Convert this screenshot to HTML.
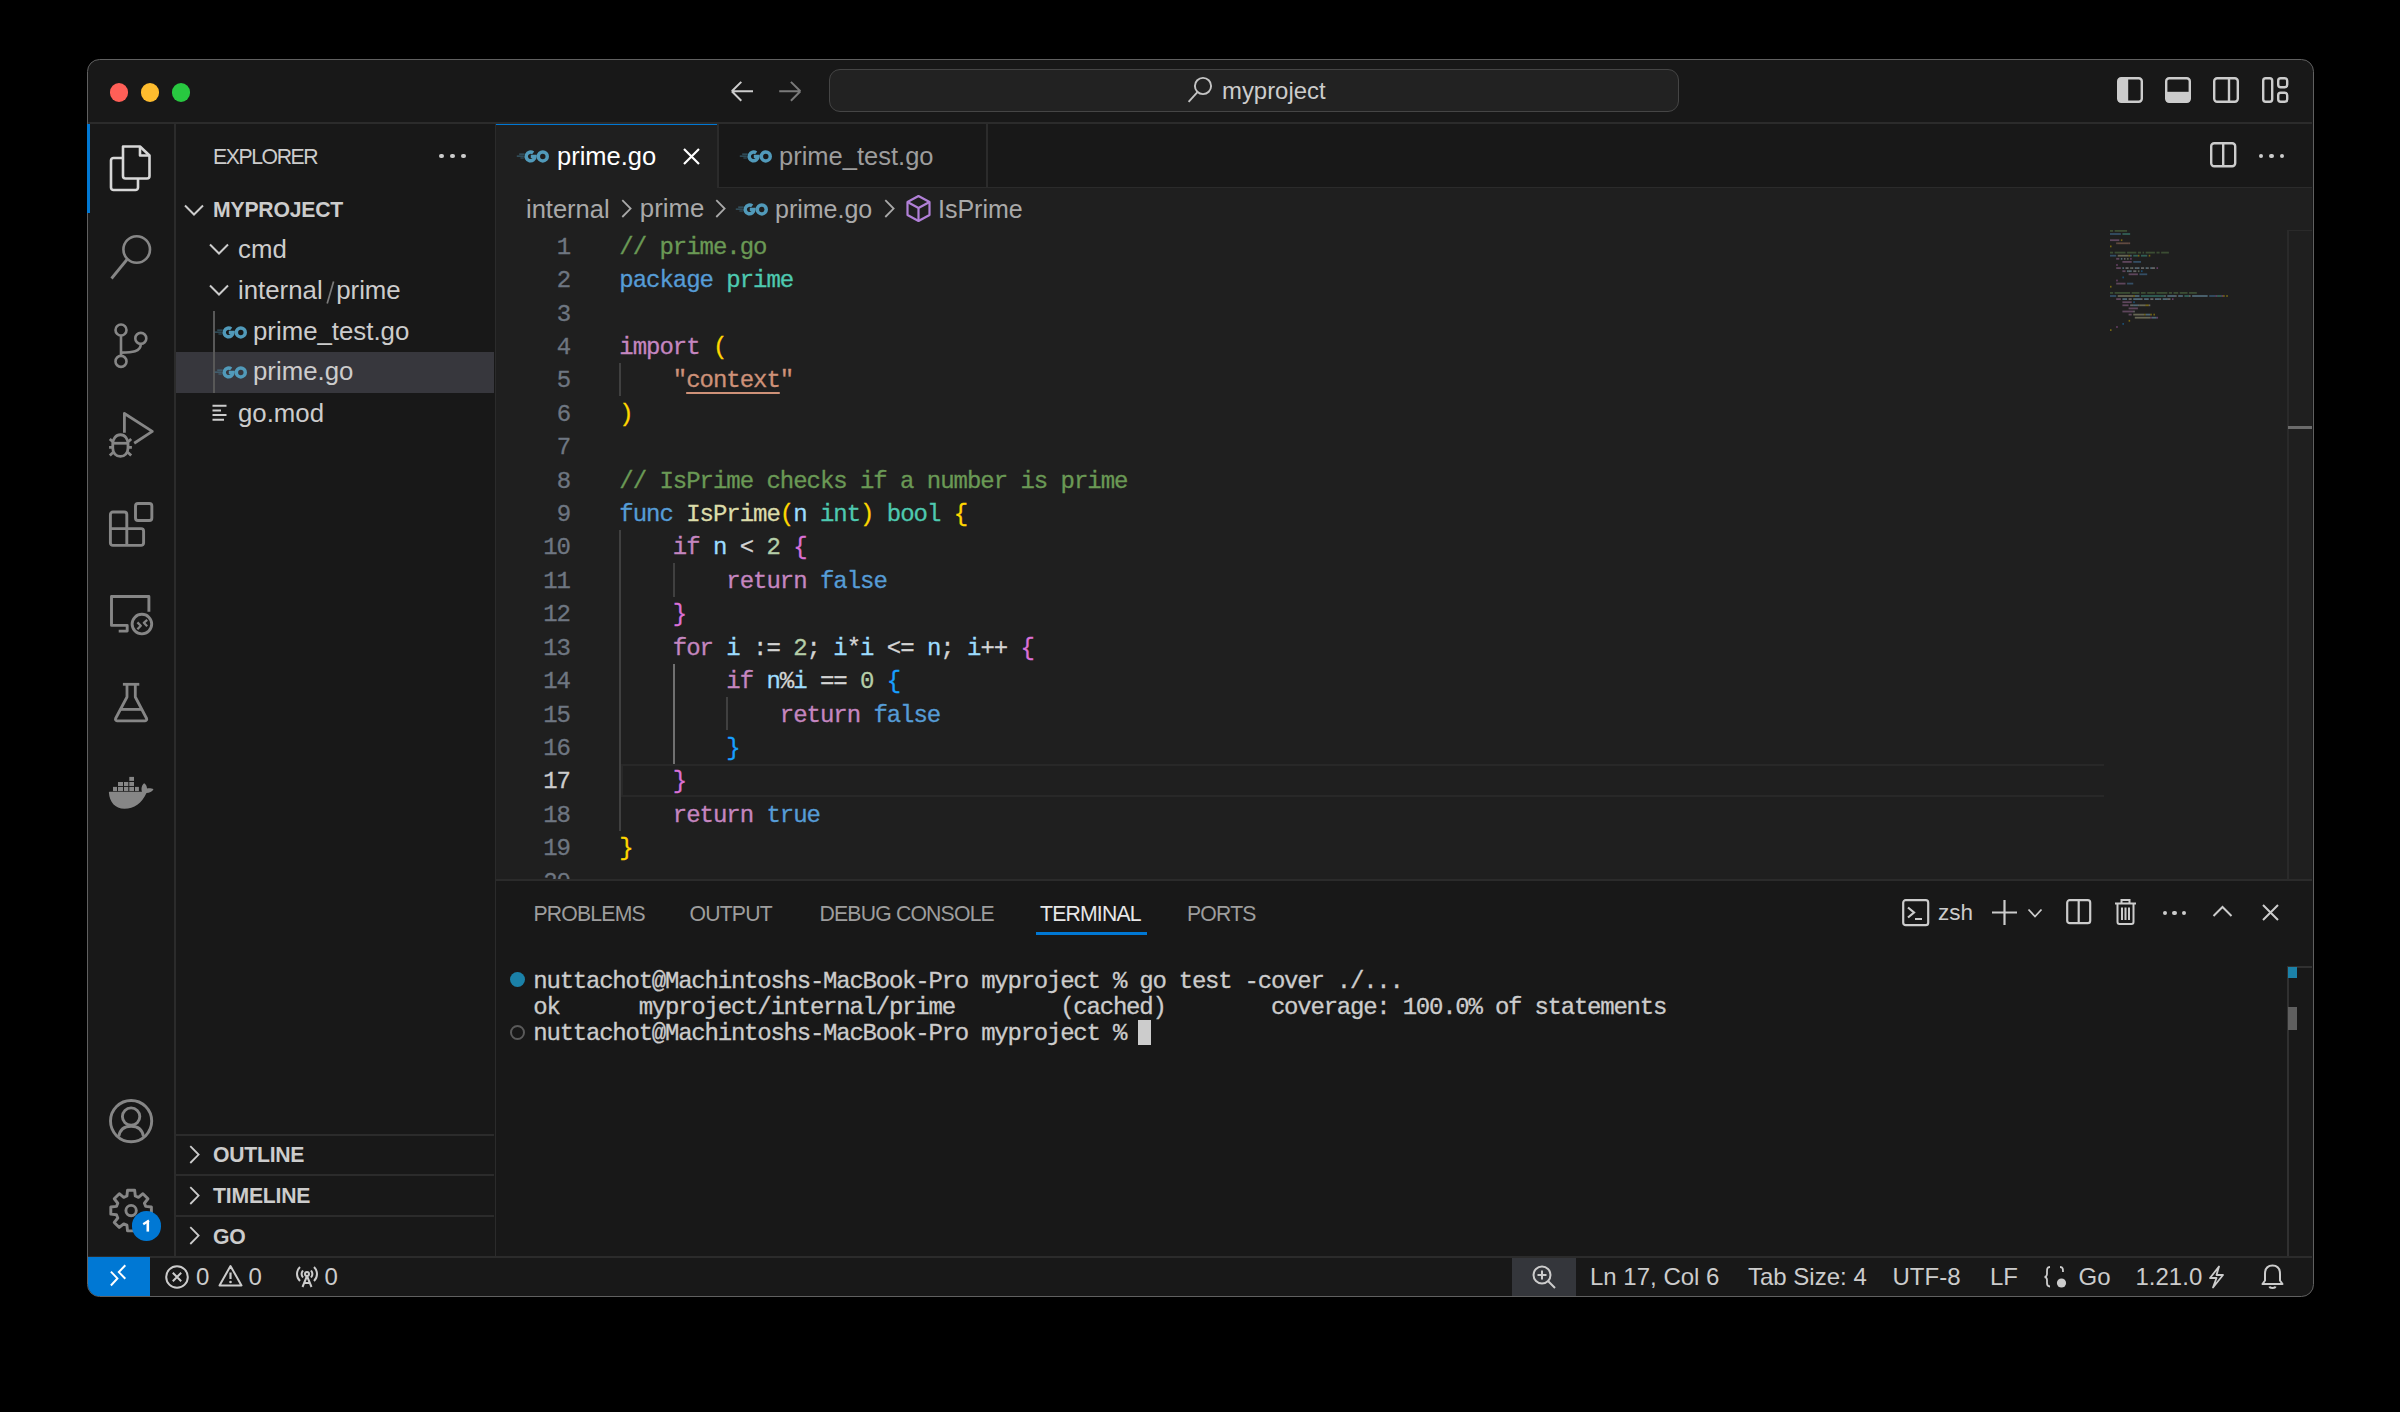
<!DOCTYPE html>
<html><head><meta charset="utf-8"><title>VS Code</title>
<style>
html,body{margin:0;padding:0;background:#000;width:2400px;height:1412px;overflow:hidden}
.t{position:absolute;white-space:pre;line-height:normal}
.r{position:absolute;box-sizing:border-box}
svg.r{overflow:visible}
#win{position:absolute;left:86.8px;top:58.9px;width:2226.9px;height:1238.1px;box-sizing:border-box;border:1.4px solid #606060;border-radius:12.5px;background:#181818}
#clip{position:absolute;left:0;top:0;width:2400px;height:1412px}
</style></head><body>
<div id="win"></div>
<div class="r" style="left:88px;top:122px;width:2224px;height:2px;background:#2B2B2B;"></div>
<div class="r" style="left:109.7px;top:83.4px;width:18.6px;height:18.6px;border-radius:50%;background:#FF5F57"></div>
<div class="r" style="left:140.7px;top:83.4px;width:18.6px;height:18.6px;border-radius:50%;background:#FEBC2E"></div>
<div class="r" style="left:171.7px;top:83.4px;width:18.6px;height:18.6px;border-radius:50%;background:#28C840"></div>
<svg class="r" style="left:728px;top:78px;" width="28" height="26" viewBox="0 0 28 26"><path d="M3.8 13.3 H25 M3.8 13.3 L13.3 3.9 M3.8 13.3 L13.3 22.7" stroke="#CCCCCC" stroke-width="2" fill="none"/></svg>
<svg class="r" style="left:777px;top:78px;" width="28" height="26" viewBox="0 0 28 26"><path d="M23.4 13.3 H2.2 M23.4 13.3 L13.9 3.9 M23.4 13.3 L13.9 22.7" stroke="#7A7A7A" stroke-width="2" fill="none"/></svg>
<div class="r" style="left:829px;top:68.6px;width:849.5px;height:43.6px;border:1.5px solid #454545;border-radius:11px;background:#222222"></div>
<svg class="r" style="left:1186px;top:76px;" width="28" height="28" viewBox="0 0 28 28"><circle cx="17" cy="10" r="8.1" stroke="#C4C4C4" stroke-width="1.9" fill="none"/><path d="M11.2 16.4 L2.6 25.8" stroke="#C4C4C4" stroke-width="1.9"/></svg>
<div class="t" style="left:1222.00px;top:77.37px;font-size:23.9px;color:#CCCCCC;font-weight:400;letter-spacing:0px;font-family:'Liberation Sans', sans-serif;">myproject</div>
<svg class="r" style="left:2117px;top:77px;" width="26" height="26" viewBox="0 0 26 26"><rect x="1.2" y="1.2" width="23.6" height="23.6" rx="3" stroke="#CCCCCC" stroke-width="2.4" fill="none"/><rect x="1" y="1" width="10" height="24" rx="2.5" fill="#CCCCCC"/><path d="M10 1 V25" stroke="#CCCCCC" stroke-width="2.4"/></svg>
<svg class="r" style="left:2165px;top:77px;" width="26" height="26" viewBox="0 0 26 26"><rect x="1.2" y="1.2" width="23.6" height="23.6" rx="3" stroke="#CCCCCC" stroke-width="2.4" fill="none"/><rect x="1" y="15" width="24" height="10" rx="2.5" fill="#CCCCCC"/><path d="M1 16 H25" stroke="#CCCCCC" stroke-width="2.4"/></svg>
<svg class="r" style="left:2213px;top:77px;" width="26" height="26" viewBox="0 0 26 26"><rect x="1.2" y="1.2" width="23.6" height="23.6" rx="3" stroke="#CCCCCC" stroke-width="2.4" fill="none"/><path d="M16 1 V25" stroke="#CCCCCC" stroke-width="2.4"/></svg>
<svg class="r" style="left:2262px;top:77px;" width="27" height="26" viewBox="0 0 27 26"><rect x="1.2" y="1.2" width="9" height="23.6" rx="2.5" stroke="#CCCCCC" stroke-width="2.4" fill="none"/><rect x="16.2" y="1.2" width="9" height="9" rx="2.5" stroke="#CCCCCC" stroke-width="2.4" fill="none"/><rect x="16.2" y="15.8" width="9" height="9" rx="2.5" stroke="#CCCCCC" stroke-width="2.4" fill="none"/></svg>
<div class="r" style="left:174px;top:124px;width:2px;height:1132px;background:#2B2B2B;"></div>
<div class="r" style="left:87px;top:124px;width:3px;height:89px;background:#0078D4;"></div>
<svg class="r" style="left:108px;top:143px;" width="44" height="50" viewBox="0 0 44 50"><g stroke="#D7D7D7" stroke-width="2.6" fill="none" stroke-linejoin="round">
<path d="M15 3.5 H32 L41.5 12.5 V33 a2.5 2.5 0 0 1 -2.5 2.5 H17.5 a2.5 2.5 0 0 1 -2.5 -2.5 Z"/>
<path d="M32 3.5 V12.5 H41.5"/>
<path d="M15 15 H5.5 a2.5 2.5 0 0 0 -2.5 2.5 V44.5 a2.5 2.5 0 0 0 2.5 2.5 H27.5 a2.5 2.5 0 0 0 2.5 -2.5 V35.5"/>
</g></svg>
<svg class="r" style="left:108px;top:232px;" width="46" height="50" viewBox="0 0 46 50"><circle cx="28.7" cy="17.5" r="13.3" stroke="#868686" stroke-width="2.6" fill="none"/><path d="M19 27.5 L3.5 46.5" stroke="#868686" stroke-width="2.8"/></svg>
<svg class="r" style="left:108px;top:318px;" width="46" height="52" viewBox="0 0 46 52"><g stroke="#868686" stroke-width="2.6" fill="none">
<circle cx="13" cy="12" r="5.5"/><circle cx="32.8" cy="20.4" r="5.5"/><circle cx="13" cy="43.4" r="5.5"/>
<path d="M13 17.5 V38"/><path d="M32.8 26 C32.8 34 24 34.5 13 34.6"/></g></svg>
<svg class="r" style="left:104px;top:408px;" width="52" height="54" viewBox="0 0 52 54"><g stroke="#868686" stroke-width="2.8" fill="none" stroke-linejoin="round">
<path d="M20.4 24.8 V5.5 L48.3 23.4 L30.2 35.25"/>
<path d="M8.75 36 C8.75 30.5 12 26.75 16.4 26.75 C20.8 26.75 24 30.5 24 36 V40 C24 45 20.8 48.4 16.4 48.4 C12 48.4 8.75 45 8.75 40 Z"/>
<path d="M8.75 35.25 H24"/>
<path d="M5.8 31 L9.3 34.2 M5.1 39.3 H8.75 M5.8 47.5 L9.3 44.3 M27.2 31 L23.7 34.2 M27.9 39.3 H24 M27.2 47.5 L23.7 44.3"/></g></svg>
<svg class="r" style="left:106px;top:500px;" width="50" height="50" viewBox="0 0 50 50"><g stroke="#868686" stroke-width="2.9" fill="none" stroke-linejoin="round">
<path d="M6.9 12 H18.3 a2.5 2.5 0 0 1 2.5 2.5 V28.6 H35.1 a2.5 2.5 0 0 1 2.5 2.5 V42.9 a2.5 2.5 0 0 1 -2.5 2.5 H6.9 a2.5 2.5 0 0 1 -2.5 -2.5 V14.5 a2.5 2.5 0 0 1 2.5 -2.5 Z"/>
<path d="M4.4 28.6 H20.8 V45.4"/>
<rect x="29.5" y="3.5" width="16.35" height="17" rx="2.5"/></g></svg>
<svg class="r" style="left:106px;top:592px;" width="52" height="44" viewBox="0 0 52 44"><g stroke="#868686" stroke-width="2.9" fill="none" stroke-linejoin="round">
<path d="M42.9 19.8 V4.5 H5.5 V33.4 H21.2 V39.1 H12.7"/>
<circle cx="35.9" cy="32.1" r="9.8"/>
<path d="M31.4 30.4 L34.8 33.8 L31.4 37.2 M41.2 27.9 L37.8 30.8 L41.2 34.2" stroke-width="2.3"/></g></svg>
<svg class="r" style="left:110px;top:680px;" width="42" height="44" viewBox="0 0 42 44"><g stroke="#868686" stroke-width="2.8" fill="none" stroke-linejoin="round">
<path d="M12.9 4.3 H29.3"/>
<path d="M17 4.3 V17 L5.6 38.5 a1.6 1.6 0 0 0 1.4 2.3 H35.2 a1.6 1.6 0 0 0 1.4 -2.3 L25.3 17 V4.3"/>
<path d="M10.8 29.4 H31.6"/></g></svg>
<svg class="r" style="left:106px;top:774px;" width="50" height="38" viewBox="0 0 50 38"><g fill="#868686">
<path d="M2.9 18.5 C2.7 17.9 3.3 17.75 4 17.75 H36 C35 15 35.5 11 38.2 9.25 C40 10.5 41 12.5 41 14.5 C43.5 14 46 14.6 47.5 15.2 C46 17.8 43.5 19 40.5 19 C36 29 28 34.75 18.5 34.75 C9 34.75 3.5 28 2.9 18.5 Z"/>
<rect x="7" y="12.9" width="4" height="4.2"/><rect x="12" y="12.9" width="5" height="4.2"/><rect x="18" y="12.9" width="4.3" height="4.2"/><rect x="23.3" y="12.9" width="4.7" height="4.2"/><rect x="29" y="12.9" width="3.9" height="4.2"/>
<rect x="12" y="8" width="5" height="4"/><rect x="18" y="8" width="4.3" height="4"/><rect x="23.3" y="8" width="4.7" height="4"/>
<rect x="23.3" y="2.9" width="4.7" height="4"/></g></svg>
<svg class="r" style="left:106px;top:1097px;" width="50" height="50" viewBox="0 0 50 50"><g stroke="#868686" stroke-width="2.9" fill="none">
<circle cx="25.1" cy="24.1" r="20.6"/><circle cx="25.1" cy="19.6" r="8.7"/>
<path d="M12.7 39.4 C14 32 19 29.2 25.1 29.2 C31.2 29.2 36.2 32 37.5 39.4"/></g></svg>
<svg class="r" style="left:106px;top:1186px;" width="50" height="50" viewBox="0 0 50 50"><path d="M20.91 9.99 L21.52 4.31 L28.68 4.31 L29.29 9.99 L32.47 11.31 L36.92 7.73 L41.97 12.78 L38.39 17.23 L39.71 20.41 L45.39 21.02 L45.39 28.18 L39.71 28.79 L38.39 31.97 L41.97 36.42 L36.92 41.47 L32.47 37.89 L29.29 39.21 L28.68 44.89 L21.52 44.89 L20.91 39.21 L17.73 37.89 L13.28 41.47 L8.23 36.42 L11.81 31.97 L10.49 28.79 L4.81 28.18 L4.81 21.02 L10.49 20.41 L11.81 17.23 L8.23 12.78 L13.28 7.73 L17.73 11.31 Z" stroke="#868686" stroke-width="2.9" fill="none" stroke-linejoin="round"/><circle cx="25.1" cy="24.6" r="5.2" stroke="#868686" stroke-width="2.9" fill="none"/></svg>
<div class="r" style="left:131.75px;top:1211.15px;width:29.5px;height:29.5px;border-radius:50%;background:#0078D4"></div>
<svg class="r" style="left:140px;top:1218px;" width="12" height="16" viewBox="0 0 12 16"><path d="M7.8 3.2 V13.6" stroke="#FFFFFF" stroke-width="2.6"/><path d="M8 3.2 L4.2 5.6" stroke="#FFFFFF" stroke-width="2.3" stroke-linecap="square"/></svg>
<div class="r" style="left:494.5px;top:124px;width:2.0px;height:1132px;background:#2B2B2B;"></div>
<div class="t" style="left:213.00px;top:145.41px;font-size:21.2px;color:#CCCCCC;font-weight:400;letter-spacing:-1.4px;font-family:'Liberation Sans', sans-serif;">EXPLORER</div>
<div class="r" style="left:439.2px;top:153.7px;width:4.6px;height:4.6px;border-radius:50%;background:#CCCCCC"></div>
<div class="r" style="left:450.2px;top:153.7px;width:4.6px;height:4.6px;border-radius:50%;background:#CCCCCC"></div>
<div class="r" style="left:461.2px;top:153.7px;width:4.6px;height:4.6px;border-radius:50%;background:#CCCCCC"></div>
<div class="r" style="left:176px;top:352px;width:318px;height:41px;background:#37373D;"></div>
<div class="r" style="left:212.5px;top:311px;width:2.0px;height:82px;background:#585858;"></div>
<svg class="r" style="left:184px;top:204px;" width="20" height="12" viewBox="0 0 20 12"><path d="M1 1.5 L10 10.5 L19 1.5" stroke="#CCCCCC" stroke-width="2" fill="none"/></svg>
<div class="t" style="left:213.00px;top:197.81px;font-size:21.2px;color:#CCCCCC;font-weight:700;letter-spacing:-0.2px;font-family:'Liberation Sans', sans-serif;">MYPROJECT</div>
<svg class="r" style="left:208.5px;top:243px;" width="20" height="12" viewBox="0 0 20 12"><path d="M1 1.5 L10 10.5 L19 1.5" stroke="#CCCCCC" stroke-width="2" fill="none"/></svg>
<div class="t" style="left:238.00px;top:235.05px;font-size:25.8px;color:#CCCCCC;font-weight:400;letter-spacing:0px;font-family:'Liberation Sans', sans-serif;">cmd</div>
<svg class="r" style="left:208.5px;top:284px;" width="20" height="12" viewBox="0 0 20 12"><path d="M1 1.5 L10 10.5 L19 1.5" stroke="#CCCCCC" stroke-width="2" fill="none"/></svg>
<div class="t" style="left:238.00px;top:275.85px;font-size:25.8px;color:#CCCCCC;font-weight:400;letter-spacing:0px;font-family:'Liberation Sans', sans-serif;">internal</div>
<svg class="r" style="left:325px;top:280px;" width="11" height="25" viewBox="0 0 11 25"><path d="M8.6 1.5 L2.2 23.5" stroke="#7A7A7A" stroke-width="1.7"/></svg>
<div class="t" style="left:336.20px;top:275.85px;font-size:25.8px;color:#CCCCCC;font-weight:400;letter-spacing:0px;font-family:'Liberation Sans', sans-serif;">prime</div>
<svg class="r" style="left:213.9px;top:324.6px;" width="34" height="16" viewBox="0 0 34 16"><g stroke="#519ABA" stroke-width="1.2" opacity="0.5"><path d="M3.2 5.2 H8.6 M0.8 7.1 H7.8 M4.4 9 H7.8"/></g>
<g stroke="#519ABA" stroke-width="3.5" fill="none">
<path d="M17.2 3.9 A4.4 4.4 0 1 0 19 7.6 H14.8"/>
<circle cx="26.8" cy="7.45" r="4.45"/>
</g></svg>
<div class="t" style="left:253.00px;top:316.65px;font-size:25.8px;color:#CCCCCC;font-weight:400;letter-spacing:0px;font-family:'Liberation Sans', sans-serif;">prime_test.go</div>
<svg class="r" style="left:213.9px;top:365.3px;" width="34" height="16" viewBox="0 0 34 16"><g stroke="#519ABA" stroke-width="1.2" opacity="0.5"><path d="M3.2 5.2 H8.6 M0.8 7.1 H7.8 M4.4 9 H7.8"/></g>
<g stroke="#519ABA" stroke-width="3.5" fill="none">
<path d="M17.2 3.9 A4.4 4.4 0 1 0 19 7.6 H14.8"/>
<circle cx="26.8" cy="7.45" r="4.45"/>
</g></svg>
<div class="t" style="left:253.00px;top:356.85px;font-size:25.8px;color:#CCCCCC;font-weight:400;letter-spacing:0px;font-family:'Liberation Sans', sans-serif;">prime.go</div>
<svg class="r" style="left:211px;top:403px;" width="18" height="19" viewBox="0 0 18 19"><g stroke="#CCCCCC" stroke-width="2"><path d="M1.5 2.7 H15.5 M1.5 7.4 H10 M1.5 12 H15.5 M1.5 16.7 H13"/></g></svg>
<div class="t" style="left:238.00px;top:398.55px;font-size:25.8px;color:#CCCCCC;font-weight:400;letter-spacing:0px;font-family:'Liberation Sans', sans-serif;">go.mod</div>
<div class="r" style="left:176px;top:1134px;width:318px;height:2px;background:#2B2B2B;"></div>
<div class="r" style="left:176px;top:1174px;width:318px;height:2px;background:#2B2B2B;"></div>
<div class="r" style="left:176px;top:1215px;width:318px;height:2px;background:#2B2B2B;"></div>
<svg class="r" style="left:189px;top:1145px;" width="12" height="20" viewBox="0 0 12 20"><path d="M1.3 1.2 L9.6 9.6 L1.3 18" stroke="#CCCCCC" stroke-width="1.8" fill="none"/></svg>
<div class="t" style="left:213.00px;top:1143.31px;font-size:21.2px;color:#CCCCCC;font-weight:700;letter-spacing:-0.25px;font-family:'Liberation Sans', sans-serif;">OUTLINE</div>
<svg class="r" style="left:189px;top:1185.5px;" width="12" height="20" viewBox="0 0 12 20"><path d="M1.3 1.2 L9.6 9.6 L1.3 18" stroke="#CCCCCC" stroke-width="1.8" fill="none"/></svg>
<div class="t" style="left:213.00px;top:1183.81px;font-size:21.2px;color:#CCCCCC;font-weight:700;letter-spacing:-0.2px;font-family:'Liberation Sans', sans-serif;">TIMELINE</div>
<svg class="r" style="left:189px;top:1226px;" width="12" height="20" viewBox="0 0 12 20"><path d="M1.3 1.2 L9.6 9.6 L1.3 18" stroke="#CCCCCC" stroke-width="1.8" fill="none"/></svg>
<div class="t" style="left:213.00px;top:1224.81px;font-size:21.2px;color:#CCCCCC;font-weight:700;letter-spacing:-0.2px;font-family:'Liberation Sans', sans-serif;">GO</div>
<div class="r" style="left:496px;top:124px;width:1816px;height:63px;background:#181818;"></div>
<div class="r" style="left:496px;top:187px;width:1816px;height:1.5999999999999943px;background:#2B2B2B;"></div>
<div class="r" style="left:496px;top:124px;width:222px;height:65px;background:#1F1F1F;"></div>
<div class="r" style="left:496px;top:123.6px;width:222px;height:1.6000000000000085px;background:#0078D4;"></div>
<div class="r" style="left:717px;top:124px;width:2px;height:64px;background:#2B2B2B;"></div>
<div class="r" style="left:986px;top:124px;width:2px;height:63px;background:#2B2B2B;"></div>
<svg class="r" style="left:515.9px;top:149.4px;" width="34" height="16" viewBox="0 0 34 16"><g stroke="#519ABA" stroke-width="1.2" opacity="0.5"><path d="M3.2 5.2 H8.6 M0.8 7.1 H7.8 M4.4 9 H7.8"/></g>
<g stroke="#519ABA" stroke-width="3.5" fill="none">
<path d="M17.2 3.9 A4.4 4.4 0 1 0 19 7.6 H14.8"/>
<circle cx="26.8" cy="7.45" r="4.45"/>
</g></svg>
<div class="t" style="left:557.00px;top:142.32px;font-size:25.5px;color:#FFFFFF;font-weight:400;letter-spacing:0px;font-family:'Liberation Sans', sans-serif;">prime.go</div>
<svg class="r" style="left:682px;top:147px;" width="19" height="19" viewBox="0 0 19 19"><path d="M2 2 L17 17 M17 2 L2 17" stroke="#FFFFFF" stroke-width="2.2"/></svg>
<svg class="r" style="left:738.5px;top:149.4px;" width="34" height="16" viewBox="0 0 34 16"><g stroke="#519ABA" stroke-width="1.2" opacity="0.5"><path d="M3.2 5.2 H8.6 M0.8 7.1 H7.8 M4.4 9 H7.8"/></g>
<g stroke="#519ABA" stroke-width="3.5" fill="none">
<path d="M17.2 3.9 A4.4 4.4 0 1 0 19 7.6 H14.8"/>
<circle cx="26.8" cy="7.45" r="4.45"/>
</g></svg>
<div class="t" style="left:779.00px;top:142.32px;font-size:25.5px;color:#9D9D9D;font-weight:400;letter-spacing:0px;font-family:'Liberation Sans', sans-serif;">prime_test.go</div>
<svg class="r" style="left:2210px;top:142px;" width="27" height="26" viewBox="0 0 27 26"><rect x="1.2" y="1.2" width="24" height="23" rx="3" stroke="#CCCCCC" stroke-width="2.4" fill="none"/><path d="M13.2 1 V25" stroke="#CCCCCC" stroke-width="2.4"/></svg>
<div class="r" style="left:2258.7px;top:153.7px;width:4.6px;height:4.6px;border-radius:50%;background:#CCCCCC"></div>
<div class="r" style="left:2269.2px;top:153.7px;width:4.6px;height:4.6px;border-radius:50%;background:#CCCCCC"></div>
<div class="r" style="left:2279.7px;top:153.7px;width:4.6px;height:4.6px;border-radius:50%;background:#CCCCCC"></div>
<div class="r" style="left:496px;top:188px;width:1816px;height:692px;background:#1F1F1F;"></div>
<div class="t" style="left:526.00px;top:194.62px;font-size:25.5px;color:#A9A9A9;font-weight:400;letter-spacing:0px;font-family:'Liberation Sans', sans-serif;">internal</div>
<svg class="r" style="left:621px;top:199px;" width="12" height="20" viewBox="0 0 12 20"><path d="M1.3 1.2 L9.6 9.6 L1.3 18" stroke="#A9A9A9" stroke-width="1.8" fill="none"/></svg>
<div class="t" style="left:639.80px;top:194.35px;font-size:25.8px;color:#A9A9A9;font-weight:400;letter-spacing:0px;font-family:'Liberation Sans', sans-serif;">prime</div>
<svg class="r" style="left:714.5px;top:199px;" width="12" height="20" viewBox="0 0 12 20"><path d="M1.3 1.2 L9.6 9.6 L1.3 18" stroke="#A9A9A9" stroke-width="1.8" fill="none"/></svg>
<svg class="r" style="left:734.5px;top:202.4px;" width="34" height="16" viewBox="0 0 34 16"><g stroke="#519ABA" stroke-width="1.2" opacity="0.5"><path d="M3.2 5.2 H8.6 M0.8 7.1 H7.8 M4.4 9 H7.8"/></g>
<g stroke="#519ABA" stroke-width="3.5" fill="none">
<path d="M17.2 3.9 A4.4 4.4 0 1 0 19 7.6 H14.8"/>
<circle cx="26.8" cy="7.45" r="4.45"/>
</g></svg>
<div class="t" style="left:775.00px;top:195.07px;font-size:25px;color:#A9A9A9;font-weight:400;letter-spacing:0px;font-family:'Liberation Sans', sans-serif;">prime.go</div>
<svg class="r" style="left:884px;top:199px;" width="12" height="20" viewBox="0 0 12 20"><path d="M1.3 1.2 L9.6 9.6 L1.3 18" stroke="#A9A9A9" stroke-width="1.8" fill="none"/></svg>
<svg class="r" style="left:905px;top:194px;" width="27" height="29" viewBox="0 0 27 29"><g stroke="#B180D7" stroke-width="2.2" fill="none" stroke-linejoin="round"><path d="M13.5 2 L24.5 8 V21 L13.5 27 L2.5 21 V8 Z"/><path d="M2.5 8 L13.5 14 L24.5 8 M13.5 14 V27"/></g></svg>
<div class="t" style="left:938.00px;top:195.07px;font-size:25px;color:#A9A9A9;font-weight:400;letter-spacing:0px;font-family:'Liberation Sans', sans-serif;">IsPrime</div>
<div class="r" style="left:621px;top:764.32px;width:1483px;height:32.62px;border:2px solid #282828;border-right:none"></div>
<div class="r" style="left:619.3px;top:362.7px;width:2.0px;height:33.400000000000034px;background:#404040;"></div>
<div class="r" style="left:619.3px;top:529.8px;width:2.0px;height:300.80000000000007px;background:#404040;"></div>
<div class="r" style="left:672.8px;top:563.2px;width:2.0px;height:33.39999999999998px;background:#404040;"></div>
<div class="r" style="left:672.8px;top:663.5px;width:2.0px;height:100.20000000000005px;background:#707070;"></div>
<div class="r" style="left:726.3px;top:696.9px;width:2.0px;height:33.39999999999998px;background:#404040;"></div>
<div class="t" style="left:556.63px;top:233.71px;font-size:24.0px;color:#6E7681;font-weight:400;letter-spacing:-1.03px;font-family:'Liberation Mono', monospace;-webkit-text-stroke:0.3px currentColor;">1</div>
<div class="t" style="left:619.30px;top:233.71px;font-size:24.0px;color:#D4D4D4;font-weight:400;letter-spacing:-1.03px;font-family:'Liberation Mono', monospace;-webkit-text-stroke:0.3px currentColor;"><span style="color:#6A9955">// prime.go</span></div>
<div class="t" style="left:556.63px;top:267.13px;font-size:24.0px;color:#6E7681;font-weight:400;letter-spacing:-1.03px;font-family:'Liberation Mono', monospace;-webkit-text-stroke:0.3px currentColor;">2</div>
<div class="t" style="left:619.30px;top:267.13px;font-size:24.0px;color:#D4D4D4;font-weight:400;letter-spacing:-1.03px;font-family:'Liberation Mono', monospace;-webkit-text-stroke:0.3px currentColor;"><span style="color:#569CD6">package</span><span style="color:#D4D4D4"> </span><span style="color:#4EC9B0">prime</span></div>
<div class="t" style="left:556.63px;top:300.55px;font-size:24.0px;color:#6E7681;font-weight:400;letter-spacing:-1.03px;font-family:'Liberation Mono', monospace;-webkit-text-stroke:0.3px currentColor;">3</div>
<div class="t" style="left:556.63px;top:333.97px;font-size:24.0px;color:#6E7681;font-weight:400;letter-spacing:-1.03px;font-family:'Liberation Mono', monospace;-webkit-text-stroke:0.3px currentColor;">4</div>
<div class="t" style="left:619.30px;top:333.97px;font-size:24.0px;color:#D4D4D4;font-weight:400;letter-spacing:-1.03px;font-family:'Liberation Mono', monospace;-webkit-text-stroke:0.3px currentColor;"><span style="color:#C586C0">import</span><span style="color:#D4D4D4"> </span><span style="color:#FFD700">(</span></div>
<div class="t" style="left:556.63px;top:367.39px;font-size:24.0px;color:#6E7681;font-weight:400;letter-spacing:-1.03px;font-family:'Liberation Mono', monospace;-webkit-text-stroke:0.3px currentColor;">5</div>
<div class="t" style="left:619.30px;top:367.39px;font-size:24.0px;color:#D4D4D4;font-weight:400;letter-spacing:-1.03px;font-family:'Liberation Mono', monospace;-webkit-text-stroke:0.3px currentColor;"><span style="color:#D4D4D4">    </span><span style="color:#CE9178">"</span><span style="color:#CE9178;text-decoration:underline;text-underline-offset:5.3px;text-decoration-thickness:1.7px">context</span><span style="color:#CE9178">"</span></div>
<div class="t" style="left:556.63px;top:400.81px;font-size:24.0px;color:#6E7681;font-weight:400;letter-spacing:-1.03px;font-family:'Liberation Mono', monospace;-webkit-text-stroke:0.3px currentColor;">6</div>
<div class="t" style="left:619.30px;top:400.81px;font-size:24.0px;color:#D4D4D4;font-weight:400;letter-spacing:-1.03px;font-family:'Liberation Mono', monospace;-webkit-text-stroke:0.3px currentColor;"><span style="color:#FFD700">)</span></div>
<div class="t" style="left:556.63px;top:434.23px;font-size:24.0px;color:#6E7681;font-weight:400;letter-spacing:-1.03px;font-family:'Liberation Mono', monospace;-webkit-text-stroke:0.3px currentColor;">7</div>
<div class="t" style="left:556.63px;top:467.65px;font-size:24.0px;color:#6E7681;font-weight:400;letter-spacing:-1.03px;font-family:'Liberation Mono', monospace;-webkit-text-stroke:0.3px currentColor;">8</div>
<div class="t" style="left:619.30px;top:467.65px;font-size:24.0px;color:#D4D4D4;font-weight:400;letter-spacing:-1.03px;font-family:'Liberation Mono', monospace;-webkit-text-stroke:0.3px currentColor;"><span style="color:#6A9955">// IsPrime checks if a number is prime</span></div>
<div class="t" style="left:556.63px;top:501.07px;font-size:24.0px;color:#6E7681;font-weight:400;letter-spacing:-1.03px;font-family:'Liberation Mono', monospace;-webkit-text-stroke:0.3px currentColor;">9</div>
<div class="t" style="left:619.30px;top:501.07px;font-size:24.0px;color:#D4D4D4;font-weight:400;letter-spacing:-1.03px;font-family:'Liberation Mono', monospace;-webkit-text-stroke:0.3px currentColor;"><span style="color:#569CD6">func</span><span style="color:#D4D4D4"> </span><span style="color:#DCDCAA">IsPrime</span><span style="color:#FFD700">(</span><span style="color:#9CDCFE">n</span><span style="color:#D4D4D4"> </span><span style="color:#4EC9B0">int</span><span style="color:#FFD700">)</span><span style="color:#D4D4D4"> </span><span style="color:#4EC9B0">bool</span><span style="color:#D4D4D4"> </span><span style="color:#FFD700">{</span></div>
<div class="t" style="left:543.26px;top:534.49px;font-size:24.0px;color:#6E7681;font-weight:400;letter-spacing:-1.03px;font-family:'Liberation Mono', monospace;-webkit-text-stroke:0.3px currentColor;">10</div>
<div class="t" style="left:619.30px;top:534.49px;font-size:24.0px;color:#D4D4D4;font-weight:400;letter-spacing:-1.03px;font-family:'Liberation Mono', monospace;-webkit-text-stroke:0.3px currentColor;"><span style="color:#D4D4D4">    </span><span style="color:#C586C0">if</span><span style="color:#D4D4D4"> </span><span style="color:#9CDCFE">n</span><span style="color:#D4D4D4"> &lt; </span><span style="color:#B5CEA8">2</span><span style="color:#D4D4D4"> </span><span style="color:#DA70D6">{</span></div>
<div class="t" style="left:543.26px;top:567.91px;font-size:24.0px;color:#6E7681;font-weight:400;letter-spacing:-1.03px;font-family:'Liberation Mono', monospace;-webkit-text-stroke:0.3px currentColor;">11</div>
<div class="t" style="left:619.30px;top:567.91px;font-size:24.0px;color:#D4D4D4;font-weight:400;letter-spacing:-1.03px;font-family:'Liberation Mono', monospace;-webkit-text-stroke:0.3px currentColor;"><span style="color:#D4D4D4">        </span><span style="color:#C586C0">return</span><span style="color:#D4D4D4"> </span><span style="color:#569CD6">false</span></div>
<div class="t" style="left:543.26px;top:601.33px;font-size:24.0px;color:#6E7681;font-weight:400;letter-spacing:-1.03px;font-family:'Liberation Mono', monospace;-webkit-text-stroke:0.3px currentColor;">12</div>
<div class="t" style="left:619.30px;top:601.33px;font-size:24.0px;color:#D4D4D4;font-weight:400;letter-spacing:-1.03px;font-family:'Liberation Mono', monospace;-webkit-text-stroke:0.3px currentColor;"><span style="color:#D4D4D4">    </span><span style="color:#DA70D6">}</span></div>
<div class="t" style="left:543.26px;top:634.75px;font-size:24.0px;color:#6E7681;font-weight:400;letter-spacing:-1.03px;font-family:'Liberation Mono', monospace;-webkit-text-stroke:0.3px currentColor;">13</div>
<div class="t" style="left:619.30px;top:634.75px;font-size:24.0px;color:#D4D4D4;font-weight:400;letter-spacing:-1.03px;font-family:'Liberation Mono', monospace;-webkit-text-stroke:0.3px currentColor;"><span style="color:#D4D4D4">    </span><span style="color:#C586C0">for</span><span style="color:#D4D4D4"> </span><span style="color:#9CDCFE">i</span><span style="color:#D4D4D4"> := </span><span style="color:#B5CEA8">2</span><span style="color:#D4D4D4">; </span><span style="color:#9CDCFE">i</span><span style="color:#D4D4D4">*</span><span style="color:#9CDCFE">i</span><span style="color:#D4D4D4"> &lt;= </span><span style="color:#9CDCFE">n</span><span style="color:#D4D4D4">; </span><span style="color:#9CDCFE">i</span><span style="color:#D4D4D4">++ </span><span style="color:#DA70D6">{</span></div>
<div class="t" style="left:543.26px;top:668.17px;font-size:24.0px;color:#6E7681;font-weight:400;letter-spacing:-1.03px;font-family:'Liberation Mono', monospace;-webkit-text-stroke:0.3px currentColor;">14</div>
<div class="t" style="left:619.30px;top:668.17px;font-size:24.0px;color:#D4D4D4;font-weight:400;letter-spacing:-1.03px;font-family:'Liberation Mono', monospace;-webkit-text-stroke:0.3px currentColor;"><span style="color:#D4D4D4">        </span><span style="color:#C586C0">if</span><span style="color:#D4D4D4"> </span><span style="color:#9CDCFE">n</span><span style="color:#D4D4D4">%</span><span style="color:#9CDCFE">i</span><span style="color:#D4D4D4"> == </span><span style="color:#B5CEA8">0</span><span style="color:#D4D4D4"> </span><span style="color:#179FFF">{</span></div>
<div class="t" style="left:543.26px;top:701.59px;font-size:24.0px;color:#6E7681;font-weight:400;letter-spacing:-1.03px;font-family:'Liberation Mono', monospace;-webkit-text-stroke:0.3px currentColor;">15</div>
<div class="t" style="left:619.30px;top:701.59px;font-size:24.0px;color:#D4D4D4;font-weight:400;letter-spacing:-1.03px;font-family:'Liberation Mono', monospace;-webkit-text-stroke:0.3px currentColor;"><span style="color:#D4D4D4">            </span><span style="color:#C586C0">return</span><span style="color:#D4D4D4"> </span><span style="color:#569CD6">false</span></div>
<div class="t" style="left:543.26px;top:735.01px;font-size:24.0px;color:#6E7681;font-weight:400;letter-spacing:-1.03px;font-family:'Liberation Mono', monospace;-webkit-text-stroke:0.3px currentColor;">16</div>
<div class="t" style="left:619.30px;top:735.01px;font-size:24.0px;color:#D4D4D4;font-weight:400;letter-spacing:-1.03px;font-family:'Liberation Mono', monospace;-webkit-text-stroke:0.3px currentColor;"><span style="color:#D4D4D4">        </span><span style="color:#179FFF">}</span></div>
<div class="t" style="left:543.26px;top:768.43px;font-size:24.0px;color:#CCCCCC;font-weight:400;letter-spacing:-1.03px;font-family:'Liberation Mono', monospace;-webkit-text-stroke:0.3px currentColor;">17</div>
<div class="t" style="left:619.30px;top:768.43px;font-size:24.0px;color:#D4D4D4;font-weight:400;letter-spacing:-1.03px;font-family:'Liberation Mono', monospace;-webkit-text-stroke:0.3px currentColor;"><span style="color:#D4D4D4">    </span><span style="color:#DA70D6">}</span></div>
<div class="t" style="left:543.26px;top:801.85px;font-size:24.0px;color:#6E7681;font-weight:400;letter-spacing:-1.03px;font-family:'Liberation Mono', monospace;-webkit-text-stroke:0.3px currentColor;">18</div>
<div class="t" style="left:619.30px;top:801.85px;font-size:24.0px;color:#D4D4D4;font-weight:400;letter-spacing:-1.03px;font-family:'Liberation Mono', monospace;-webkit-text-stroke:0.3px currentColor;"><span style="color:#D4D4D4">    </span><span style="color:#C586C0">return</span><span style="color:#D4D4D4"> </span><span style="color:#569CD6">true</span></div>
<div class="t" style="left:543.26px;top:835.27px;font-size:24.0px;color:#6E7681;font-weight:400;letter-spacing:-1.03px;font-family:'Liberation Mono', monospace;-webkit-text-stroke:0.3px currentColor;">19</div>
<div class="t" style="left:619.30px;top:835.27px;font-size:24.0px;color:#D4D4D4;font-weight:400;letter-spacing:-1.03px;font-family:'Liberation Mono', monospace;-webkit-text-stroke:0.3px currentColor;"><span style="color:#FFD700">}</span></div>
<div class="t" style="left:543.26px;top:868.69px;font-size:24.0px;color:#6E7681;font-weight:400;letter-spacing:-1.03px;font-family:'Liberation Mono', monospace;-webkit-text-stroke:0.3px currentColor;">20</div>
<div class="r" style="left:2287px;top:230px;width:2px;height:650px;background:#2A2A2A;"></div>
<div class="r" style="left:2288px;top:229.5px;width:24px;height:1.5px;background:#2A2A2A;"></div>
<div class="r" style="left:2288px;top:426px;width:24px;height:3px;background:#6B6B6B;"></div>
<svg class="r" style="left:2110px;top:230px;" width="120" height="110" viewBox="0 0 120 110"><rect x="0.00" y="0.00" width="3.10" height="1.8" fill="#6A9955" opacity="0.38"/><rect x="4.65" y="0.00" width="12.40" height="1.8" fill="#6A9955" opacity="0.38"/><rect x="0.00" y="3.10" width="10.85" height="1.8" fill="#569CD6" opacity="0.38"/><rect x="12.40" y="3.10" width="7.75" height="1.8" fill="#4EC9B0" opacity="0.38"/><rect x="0.00" y="9.30" width="9.30" height="1.8" fill="#C586C0" opacity="0.38"/><rect x="10.85" y="9.30" width="1.55" height="1.8" fill="#FFD700" opacity="0.38"/><rect x="6.20" y="12.40" width="1.55" height="1.8" fill="#CE9178" opacity="0.38"/><rect x="7.75" y="12.40" width="10.85" height="1.8" fill="#CE9178" opacity="0.38"/><rect x="18.60" y="12.40" width="1.55" height="1.8" fill="#CE9178" opacity="0.38"/><rect x="0.00" y="15.50" width="1.55" height="1.8" fill="#FFD700" opacity="0.38"/><rect x="0.00" y="21.70" width="3.10" height="1.8" fill="#6A9955" opacity="0.38"/><rect x="4.65" y="21.70" width="10.85" height="1.8" fill="#6A9955" opacity="0.38"/><rect x="17.05" y="21.70" width="9.30" height="1.8" fill="#6A9955" opacity="0.38"/><rect x="27.90" y="21.70" width="3.10" height="1.8" fill="#6A9955" opacity="0.38"/><rect x="32.55" y="21.70" width="1.55" height="1.8" fill="#6A9955" opacity="0.38"/><rect x="35.65" y="21.70" width="9.30" height="1.8" fill="#6A9955" opacity="0.38"/><rect x="46.50" y="21.70" width="3.10" height="1.8" fill="#6A9955" opacity="0.38"/><rect x="51.15" y="21.70" width="7.75" height="1.8" fill="#6A9955" opacity="0.38"/><rect x="0.00" y="24.80" width="6.20" height="1.8" fill="#569CD6" opacity="0.38"/><rect x="7.75" y="24.80" width="10.85" height="1.8" fill="#DCDCAA" opacity="0.38"/><rect x="18.60" y="24.80" width="1.55" height="1.8" fill="#FFD700" opacity="0.38"/><rect x="20.15" y="24.80" width="1.55" height="1.8" fill="#9CDCFE" opacity="0.38"/><rect x="23.25" y="24.80" width="4.65" height="1.8" fill="#4EC9B0" opacity="0.38"/><rect x="27.90" y="24.80" width="1.55" height="1.8" fill="#FFD700" opacity="0.38"/><rect x="31.00" y="24.80" width="6.20" height="1.8" fill="#4EC9B0" opacity="0.38"/><rect x="38.75" y="24.80" width="1.55" height="1.8" fill="#FFD700" opacity="0.38"/><rect x="6.20" y="27.90" width="3.10" height="1.8" fill="#C586C0" opacity="0.38"/><rect x="10.85" y="27.90" width="1.55" height="1.8" fill="#9CDCFE" opacity="0.38"/><rect x="13.95" y="27.90" width="1.55" height="1.8" fill="#D4D4D4" opacity="0.38"/><rect x="17.05" y="27.90" width="1.55" height="1.8" fill="#B5CEA8" opacity="0.38"/><rect x="20.15" y="27.90" width="1.55" height="1.8" fill="#DA70D6" opacity="0.38"/><rect x="12.40" y="31.00" width="9.30" height="1.8" fill="#C586C0" opacity="0.38"/><rect x="23.25" y="31.00" width="7.75" height="1.8" fill="#569CD6" opacity="0.38"/><rect x="6.20" y="34.10" width="1.55" height="1.8" fill="#DA70D6" opacity="0.38"/><rect x="6.20" y="37.20" width="4.65" height="1.8" fill="#C586C0" opacity="0.38"/><rect x="12.40" y="37.20" width="1.55" height="1.8" fill="#9CDCFE" opacity="0.38"/><rect x="15.50" y="37.20" width="3.10" height="1.8" fill="#D4D4D4" opacity="0.38"/><rect x="20.15" y="37.20" width="1.55" height="1.8" fill="#B5CEA8" opacity="0.38"/><rect x="21.70" y="37.20" width="1.55" height="1.8" fill="#D4D4D4" opacity="0.38"/><rect x="24.80" y="37.20" width="1.55" height="1.8" fill="#9CDCFE" opacity="0.38"/><rect x="26.35" y="37.20" width="1.55" height="1.8" fill="#D4D4D4" opacity="0.38"/><rect x="27.90" y="37.20" width="1.55" height="1.8" fill="#9CDCFE" opacity="0.38"/><rect x="31.00" y="37.20" width="3.10" height="1.8" fill="#D4D4D4" opacity="0.38"/><rect x="35.65" y="37.20" width="1.55" height="1.8" fill="#9CDCFE" opacity="0.38"/><rect x="37.20" y="37.20" width="1.55" height="1.8" fill="#D4D4D4" opacity="0.38"/><rect x="40.30" y="37.20" width="1.55" height="1.8" fill="#9CDCFE" opacity="0.38"/><rect x="41.85" y="37.20" width="3.10" height="1.8" fill="#D4D4D4" opacity="0.38"/><rect x="46.50" y="37.20" width="1.55" height="1.8" fill="#DA70D6" opacity="0.38"/><rect x="12.40" y="40.30" width="3.10" height="1.8" fill="#C586C0" opacity="0.38"/><rect x="17.05" y="40.30" width="1.55" height="1.8" fill="#9CDCFE" opacity="0.38"/><rect x="18.60" y="40.30" width="1.55" height="1.8" fill="#D4D4D4" opacity="0.38"/><rect x="20.15" y="40.30" width="1.55" height="1.8" fill="#9CDCFE" opacity="0.38"/><rect x="23.25" y="40.30" width="3.10" height="1.8" fill="#D4D4D4" opacity="0.38"/><rect x="27.90" y="40.30" width="1.55" height="1.8" fill="#B5CEA8" opacity="0.38"/><rect x="31.00" y="40.30" width="1.55" height="1.8" fill="#179FFF" opacity="0.38"/><rect x="18.60" y="43.40" width="9.30" height="1.8" fill="#C586C0" opacity="0.38"/><rect x="29.45" y="43.40" width="7.75" height="1.8" fill="#569CD6" opacity="0.38"/><rect x="12.40" y="46.50" width="1.55" height="1.8" fill="#179FFF" opacity="0.38"/><rect x="6.20" y="49.60" width="1.55" height="1.8" fill="#DA70D6" opacity="0.38"/><rect x="6.20" y="52.70" width="9.30" height="1.8" fill="#C586C0" opacity="0.38"/><rect x="17.05" y="52.70" width="6.20" height="1.8" fill="#569CD6" opacity="0.38"/><rect x="0.00" y="55.80" width="1.55" height="1.8" fill="#FFD700" opacity="0.38"/><rect x="0.00" y="62.00" width="3.10" height="1.8" fill="#6A9955" opacity="0.38"/><rect x="4.65" y="62.00" width="15.50" height="1.8" fill="#6A9955" opacity="0.38"/><rect x="21.70" y="62.00" width="7.75" height="1.8" fill="#6A9955" opacity="0.38"/><rect x="31.00" y="62.00" width="4.65" height="1.8" fill="#6A9955" opacity="0.38"/><rect x="37.20" y="62.00" width="7.75" height="1.8" fill="#6A9955" opacity="0.38"/><rect x="46.50" y="62.00" width="10.85" height="1.8" fill="#6A9955" opacity="0.38"/><rect x="58.90" y="62.00" width="3.10" height="1.8" fill="#6A9955" opacity="0.38"/><rect x="63.55" y="62.00" width="4.65" height="1.8" fill="#6A9955" opacity="0.38"/><rect x="69.75" y="62.00" width="7.75" height="1.8" fill="#6A9955" opacity="0.38"/><rect x="79.05" y="62.00" width="7.75" height="1.8" fill="#6A9955" opacity="0.38"/><rect x="0.00" y="65.10" width="6.20" height="1.8" fill="#569CD6" opacity="0.38"/><rect x="7.75" y="65.10" width="15.50" height="1.8" fill="#DCDCAA" opacity="0.38"/><rect x="23.25" y="65.10" width="1.55" height="1.8" fill="#FFD700" opacity="0.38"/><rect x="24.80" y="65.10" width="4.65" height="1.8" fill="#9CDCFE" opacity="0.38"/><rect x="31.00" y="65.10" width="23.25" height="1.8" fill="#4EC9B0" opacity="0.38"/><rect x="54.25" y="65.10" width="1.55" height="1.8" fill="#D4D4D4" opacity="0.38"/><rect x="57.35" y="65.10" width="7.75" height="1.8" fill="#9CDCFE" opacity="0.38"/><rect x="65.10" y="65.10" width="1.55" height="1.8" fill="#D4D4D4" opacity="0.38"/><rect x="68.20" y="65.10" width="4.65" height="1.8" fill="#9CDCFE" opacity="0.38"/><rect x="74.40" y="65.10" width="4.65" height="1.8" fill="#4EC9B0" opacity="0.38"/><rect x="79.05" y="65.10" width="1.55" height="1.8" fill="#D4D4D4" opacity="0.38"/><rect x="82.15" y="65.10" width="15.50" height="1.8" fill="#9CDCFE" opacity="0.38"/><rect x="99.20" y="65.10" width="6.20" height="1.8" fill="#569CD6" opacity="0.38"/><rect x="105.40" y="65.10" width="1.55" height="1.8" fill="#DA70D6" opacity="0.38"/><rect x="106.95" y="65.10" width="4.65" height="1.8" fill="#4EC9B0" opacity="0.38"/><rect x="111.60" y="65.10" width="1.55" height="1.8" fill="#DA70D6" opacity="0.38"/><rect x="113.15" y="65.10" width="1.55" height="1.8" fill="#FFD700" opacity="0.38"/><rect x="116.25" y="65.10" width="1.55" height="1.8" fill="#FFD700" opacity="0.38"/><rect x="6.20" y="68.20" width="4.65" height="1.8" fill="#C586C0" opacity="0.38"/><rect x="12.40" y="68.20" width="4.65" height="1.8" fill="#9CDCFE" opacity="0.38"/><rect x="18.60" y="68.20" width="3.10" height="1.8" fill="#D4D4D4" opacity="0.38"/><rect x="23.25" y="68.20" width="7.75" height="1.8" fill="#9CDCFE" opacity="0.38"/><rect x="31.00" y="68.20" width="1.55" height="1.8" fill="#D4D4D4" opacity="0.38"/><rect x="34.10" y="68.20" width="4.65" height="1.8" fill="#9CDCFE" opacity="0.38"/><rect x="40.30" y="68.20" width="3.10" height="1.8" fill="#D4D4D4" opacity="0.38"/><rect x="44.95" y="68.20" width="4.65" height="1.8" fill="#9CDCFE" opacity="0.38"/><rect x="49.60" y="68.20" width="1.55" height="1.8" fill="#D4D4D4" opacity="0.38"/><rect x="52.70" y="68.20" width="4.65" height="1.8" fill="#9CDCFE" opacity="0.38"/><rect x="57.35" y="68.20" width="3.10" height="1.8" fill="#D4D4D4" opacity="0.38"/><rect x="62.00" y="68.20" width="1.55" height="1.8" fill="#DA70D6" opacity="0.38"/><rect x="12.40" y="71.30" width="9.30" height="1.8" fill="#C586C0" opacity="0.38"/><rect x="23.25" y="71.30" width="1.55" height="1.8" fill="#179FFF" opacity="0.38"/><rect x="12.40" y="74.40" width="6.20" height="1.8" fill="#C586C0" opacity="0.38"/><rect x="20.15" y="74.40" width="3.10" height="1.8" fill="#D4D4D4" opacity="0.38"/><rect x="23.25" y="74.40" width="4.65" height="1.8" fill="#9CDCFE" opacity="0.38"/><rect x="27.90" y="74.40" width="1.55" height="1.8" fill="#D4D4D4" opacity="0.38"/><rect x="29.45" y="74.40" width="6.20" height="1.8" fill="#DCDCAA" opacity="0.38"/><rect x="35.65" y="74.40" width="3.10" height="1.8" fill="#FFD700" opacity="0.38"/><rect x="38.75" y="74.40" width="1.55" height="1.8" fill="#D4D4D4" opacity="0.38"/><rect x="18.60" y="77.50" width="9.30" height="1.8" fill="#C586C0" opacity="0.38"/><rect x="12.40" y="80.60" width="10.85" height="1.8" fill="#C586C0" opacity="0.38"/><rect x="23.25" y="80.60" width="1.55" height="1.8" fill="#D4D4D4" opacity="0.38"/><rect x="18.60" y="83.70" width="3.10" height="1.8" fill="#C586C0" opacity="0.38"/><rect x="23.25" y="83.70" width="10.85" height="1.8" fill="#DCDCAA" opacity="0.38"/><rect x="34.10" y="83.70" width="1.55" height="1.8" fill="#FFD700" opacity="0.38"/><rect x="35.65" y="83.70" width="4.65" height="1.8" fill="#9CDCFE" opacity="0.38"/><rect x="40.30" y="83.70" width="1.55" height="1.8" fill="#FFD700" opacity="0.38"/><rect x="43.40" y="83.70" width="1.55" height="1.8" fill="#FFD700" opacity="0.38"/><rect x="24.80" y="86.80" width="15.50" height="1.8" fill="#DCDCAA" opacity="0.38"/><rect x="40.30" y="86.80" width="1.55" height="1.8" fill="#DA70D6" opacity="0.38"/><rect x="41.85" y="86.80" width="4.65" height="1.8" fill="#9CDCFE" opacity="0.38"/><rect x="46.50" y="86.80" width="1.55" height="1.8" fill="#DA70D6" opacity="0.38"/><rect x="18.60" y="89.90" width="1.55" height="1.8" fill="#FFD700" opacity="0.38"/><rect x="12.40" y="93.00" width="1.55" height="1.8" fill="#179FFF" opacity="0.38"/><rect x="6.20" y="96.10" width="1.55" height="1.8" fill="#DA70D6" opacity="0.38"/><rect x="0.00" y="99.20" width="1.55" height="1.8" fill="#FFD700" opacity="0.38"/></svg>
<div class="r" style="left:496px;top:880px;width:1816px;height:376px;background:#181818;"></div>
<div class="r" style="left:496px;top:879px;width:1816px;height:2px;background:#2B2B2B;"></div>
<div class="t" style="left:533.50px;top:901.51px;font-size:21.2px;color:#9D9D9D;font-weight:400;letter-spacing:-0.8px;font-family:'Liberation Sans', sans-serif;">PROBLEMS</div>
<div class="t" style="left:689.50px;top:901.51px;font-size:21.2px;color:#9D9D9D;font-weight:400;letter-spacing:-0.8px;font-family:'Liberation Sans', sans-serif;">OUTPUT</div>
<div class="t" style="left:819.50px;top:901.51px;font-size:21.2px;color:#9D9D9D;font-weight:400;letter-spacing:-0.8px;font-family:'Liberation Sans', sans-serif;">DEBUG CONSOLE</div>
<div class="t" style="left:1040.00px;top:901.51px;font-size:21.2px;color:#E7E7E7;font-weight:400;letter-spacing:-0.8px;font-family:'Liberation Sans', sans-serif;">TERMINAL</div>
<div class="t" style="left:1187.00px;top:901.51px;font-size:21.2px;color:#9D9D9D;font-weight:400;letter-spacing:-0.8px;font-family:'Liberation Sans', sans-serif;">PORTS</div>
<div class="r" style="left:1036px;top:932px;width:111px;height:2.5px;background:#0078D4;"></div>
<svg class="r" style="left:1902px;top:899px;" width="28" height="28" viewBox="0 0 28 28"><rect x="1.2" y="1.2" width="25" height="25" rx="2.5" stroke="#CCCCCC" stroke-width="2.2" fill="none"/><path d="M6 8.5 L12 13.5 L6 18.5 M13 20 H20" stroke="#CCCCCC" stroke-width="2.2" fill="none"/></svg>
<div class="t" style="left:1938.00px;top:899.64px;font-size:22.5px;color:#CCCCCC;font-weight:400;letter-spacing:0px;font-family:'Liberation Sans', sans-serif;">zsh</div>
<svg class="r" style="left:1991px;top:899px;" width="27" height="27" viewBox="0 0 27 27"><path d="M13.5 1 V26 M1 13.5 H26" stroke="#CCCCCC" stroke-width="2.2"/></svg>
<svg class="r" style="left:2027px;top:908px;" width="16" height="11" viewBox="0 0 16 11"><path d="M1.5 1.5 L8 8.5 L14.5 1.5" stroke="#CCCCCC" stroke-width="1.8" fill="none"/></svg>
<svg class="r" style="left:2066px;top:899px;" width="26" height="26" viewBox="0 0 26 26"><rect x="1.2" y="1.2" width="23" height="23" rx="2.5" stroke="#CCCCCC" stroke-width="2.2" fill="none"/><path d="M12.7 1 V25" stroke="#CCCCCC" stroke-width="2.2"/></svg>
<svg class="r" style="left:2114px;top:898px;" width="23" height="27" viewBox="0 0 23 27"><g stroke="#CCCCCC" stroke-width="2" fill="none"><path d="M1 5.5 H22 M7.5 5.5 V2 H15.5 V5.5"/><path d="M3.5 5.5 V24 a2 2 0 0 0 2 2 H17.5 a2 2 0 0 0 2 -2 V5.5"/><path d="M8 9.5 V22 M11.5 9.5 V22 M15 9.5 V22"/></g></svg>
<div class="r" style="left:2162.8px;top:910.8px;width:4.4px;height:4.4px;border-radius:50%;background:#CCCCCC"></div>
<div class="r" style="left:2172.3px;top:910.8px;width:4.4px;height:4.4px;border-radius:50%;background:#CCCCCC"></div>
<div class="r" style="left:2181.8px;top:910.8px;width:4.4px;height:4.4px;border-radius:50%;background:#CCCCCC"></div>
<svg class="r" style="left:2212px;top:905px;" width="21" height="13" viewBox="0 0 21 13"><path d="M1.5 11 L10.5 2 L19.5 11" stroke="#CCCCCC" stroke-width="2" fill="none"/></svg>
<svg class="r" style="left:2261px;top:903px;" width="19" height="19" viewBox="0 0 19 19"><path d="M2 2 L17 17 M17 2 L2 17" stroke="#CCCCCC" stroke-width="2"/></svg>
<div class="t" style="left:533.30px;top:967.71px;font-size:24.0px;color:#CCCCCC;font-weight:400;letter-spacing:-1.23px;font-family:'Liberation Mono', monospace;-webkit-text-stroke:0.3px currentColor;">nuttachot@Machintoshs-MacBook-Pro myproject % go test -cover ./...</div>
<div class="t" style="left:533.30px;top:993.91px;font-size:24.0px;color:#CCCCCC;font-weight:400;letter-spacing:-1.23px;font-family:'Liberation Mono', monospace;-webkit-text-stroke:0.3px currentColor;">ok      myproject/internal/prime        (cached)        coverage: 100.0% of statements</div>
<div class="t" style="left:533.30px;top:1020.11px;font-size:24.0px;color:#CCCCCC;font-weight:400;letter-spacing:-1.23px;font-family:'Liberation Mono', monospace;-webkit-text-stroke:0.3px currentColor;">nuttachot@Machintoshs-MacBook-Pro myproject % </div>
<div class="r" style="left:1138.3px;top:1019.5px;width:13px;height:25.5px;background:#CCCCCC"></div>
<div class="r" style="left:509.5px;top:972px;width:15px;height:15px;border-radius:50%;background:#1B81A8"></div>
<div class="r" style="left:509.5px;top:1025px;width:15px;height:15px;border-radius:50%;border:2px solid #5A5A5A;box-sizing:border-box"></div>
<div class="r" style="left:2287px;top:966px;width:2px;height:290px;background:#303030;"></div>
<div class="r" style="left:2288px;top:965.5px;width:24px;height:2.0px;background:#303030;"></div>
<div class="r" style="left:2288px;top:967px;width:9px;height:11px;background:#1B81A8;"></div>
<div class="r" style="left:2288px;top:1007px;width:9px;height:23px;background:#5F5F5F;"></div>
<div class="r" style="left:88px;top:1256px;width:2224px;height:2px;background:#2B2B2B;"></div>
<div class="r" style="left:87.5px;top:1257px;width:62.5px;height:39.3px;background:#0078D4;border-bottom-left-radius:11.5px"></div>
<svg class="r" style="left:108px;top:1263px;" width="20" height="26" viewBox="0 0 20 26"><path d="M2.9 8.6 L9.4 15.4 L2.9 22.5 M17.3 2.3 L10.8 9.1 L17.3 15.7" stroke="#FFFFFF" stroke-width="2" fill="none"/></svg>
<svg class="r" style="left:164px;top:1264px;" width="26" height="26" viewBox="0 0 26 26"><circle cx="13" cy="13" r="10.8" stroke="#CCCCCC" stroke-width="2" fill="none"/><path d="M8.8 8.8 L17.2 17.2 M17.2 8.8 L8.8 17.2" stroke="#CCCCCC" stroke-width="2"/></svg>
<div class="t" style="left:196.00px;top:1262.68px;font-size:24px;color:#CCCCCC;font-weight:400;letter-spacing:0px;font-family:'Liberation Sans', sans-serif;">0</div>
<svg class="r" style="left:218px;top:1264px;" width="25" height="23" viewBox="0 0 25 23"><path d="M12.5 2 L23.5 21.5 H1.5 Z" stroke="#CCCCCC" stroke-width="2" fill="none" stroke-linejoin="round"/><path d="M12.5 8.5 V15" stroke="#CCCCCC" stroke-width="2.2"/><circle cx="12.5" cy="18" r="1.3" fill="#CCCCCC"/></svg>
<div class="t" style="left:248.50px;top:1262.68px;font-size:24px;color:#CCCCCC;font-weight:400;letter-spacing:0px;font-family:'Liberation Sans', sans-serif;">0</div>
<svg class="r" style="left:295px;top:1264px;" width="24" height="24" viewBox="0 0 24 24"><g stroke="#CCCCCC" stroke-width="2" fill="none"><path d="M5 3 C1 7 1 13 5 17 M19 3 C23 7 23 13 19 17 M8 6.5 C6 9 6 11 8 13.5 M16 6.5 C18 9 18 11 16 13.5"/><circle cx="12" cy="10" r="2"/><path d="M12 12 L7.5 23 M12 12 L16.5 23 M9 19 H15"/></g></svg>
<div class="t" style="left:324.50px;top:1262.68px;font-size:24px;color:#CCCCCC;font-weight:400;letter-spacing:0px;font-family:'Liberation Sans', sans-serif;">0</div>
<div class="r" style="left:1512px;top:1258px;width:64px;height:38px;background:#34363B;"></div>
<svg class="r" style="left:1531px;top:1264px;" width="26" height="26" viewBox="0 0 26 26"><circle cx="11" cy="11" r="8.5" stroke="#CCCCCC" stroke-width="2" fill="none"/><path d="M17 17 L24 24 M11 6.5 V15.5 M6.5 11 H15.5" stroke="#CCCCCC" stroke-width="2"/></svg>
<div class="t" style="left:1590.00px;top:1263.28px;font-size:24px;color:#CCCCCC;font-weight:400;letter-spacing:0px;font-family:'Liberation Sans', sans-serif;">Ln 17, Col 6</div>
<div class="t" style="left:1748.00px;top:1263.28px;font-size:24px;color:#CCCCCC;font-weight:400;letter-spacing:0px;font-family:'Liberation Sans', sans-serif;">Tab Size: 4</div>
<div class="t" style="left:1892.50px;top:1263.28px;font-size:24px;color:#CCCCCC;font-weight:400;letter-spacing:0px;font-family:'Liberation Sans', sans-serif;">UTF-8</div>
<div class="t" style="left:1990.00px;top:1263.28px;font-size:24px;color:#CCCCCC;font-weight:400;letter-spacing:0px;font-family:'Liberation Sans', sans-serif;">LF</div>
<svg class="r" style="left:2043px;top:1265px;" width="25" height="24" viewBox="0 0 25 24"><path d="M7 2 C4 2 4 4 4 7 V9 C4 11 2.5 12 1.5 12 C2.5 12 4 13 4 15 V18 C4 20.5 5 21.5 7 21.5 M17 2 C20 2 20 4 20 7" stroke="#CCCCCC" stroke-width="1.8" fill="none"/><circle cx="18.5" cy="18" r="4.6" fill="#CCCCCC"/></svg>
<div class="t" style="left:2078.50px;top:1263.28px;font-size:24px;color:#CCCCCC;font-weight:400;letter-spacing:0px;font-family:'Liberation Sans', sans-serif;">Go</div>
<div class="t" style="left:2135.50px;top:1263.28px;font-size:24px;color:#CCCCCC;font-weight:400;letter-spacing:0px;font-family:'Liberation Sans', sans-serif;">1.21.0</div>
<svg class="r" style="left:2207px;top:1265px;" width="19" height="24" viewBox="0 0 19 24"><path d="M12 1.5 L3 13 H9.5 L6 22.5 L16 10 H9.5 Z" stroke="#CCCCCC" stroke-width="1.8" fill="none" stroke-linejoin="round"/></svg>
<svg class="r" style="left:2260px;top:1263px;" width="25" height="27" viewBox="0 0 25 27"><path d="M12.5 2.5 C7.5 2.5 5 6 5 11 V17.5 L2.5 21 H22.5 L20 17.5 V11 C20 6 17.5 2.5 12.5 2.5 Z M9.5 23.5 C10 25.5 15 25.5 15.5 23.5" stroke="#CCCCCC" stroke-width="2" fill="none" stroke-linejoin="round"/></svg>
</body></html>
